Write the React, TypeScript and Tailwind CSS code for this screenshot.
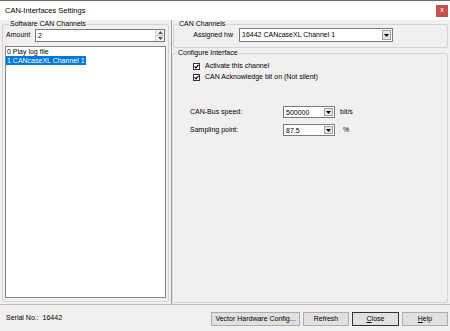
import React from "react";

function GroupBox({
  label,
  className,
  children,
}: {
  label: string;
  className?: string;
  children?: React.ReactNode;
}) {
  return (
    <fieldset className={`rounded-[2px] border border-[#d5d5d5] ${className ?? ""}`}>
      <legend className="ml-[4px] px-[1px] leading-[8px]">{label}</legend>
      {children}
    </fieldset>
  );
}

function DropArrow() {
  return (
    <span className="flex h-full w-[9px] items-center justify-center border border-[#a0a0a0] bg-[#e6e6e6]">
      <svg width="5" height="3" viewBox="0 0 5 3">
        <path d="M0 0h5L2.5 3z" fill="#000" />
      </svg>
    </span>
  );
}

function Combo({ value, className }: { value: string; className?: string }) {
  return (
    <div
      className={`flex items-stretch border border-[#7a7a7a] bg-white p-[1px] ${className ?? ""}`}
    >
      <span className="flex-1 pl-[1px] leading-[10px]">{value}</span>
      <DropArrow />
    </div>
  );
}

function CheckBox({ label }: { label: string }) {
  return (
    <div className="flex h-[11px] items-center gap-[5px]">
      <span className="flex h-[7px] w-[7px] items-center justify-center border border-[#333] bg-white">
        <svg width="5" height="5" viewBox="0 0 5 5">
          <path d="M0.5 2.3L2 3.8L4.5 0.8" stroke="#000" strokeWidth="1.2" fill="none" />
        </svg>
      </span>
      <span>{label}</span>
    </div>
  );
}

function Button({
  children,
  width,
  primary,
}: {
  children: React.ReactNode;
  width: string;
  primary?: boolean;
}) {
  return (
    <button
      className={`flex h-[14px] items-center justify-center bg-[#e1e1e1] leading-none ${width} ${
        primary ? "border border-[#333]" : "border border-[#adadad]"
      }`}
    >
      {children}
    </button>
  );
}

export default function App() {
  return (
    <div className="flex h-[331px] w-[450px] flex-col overflow-hidden bg-[#f0f0f0] font-['Liberation_Sans',Arial,sans-serif] text-[7px] text-black">
      {/* title bar */}
      <div className="flex h-[20px] shrink-0 items-center justify-between border-t border-[#6b6b6b] bg-white pl-[5px] pr-[2px]">
        <span className="text-[7.5px]">CAN-Interfaces Settings</span>
        <span className="flex h-[12px] w-[12px] items-center justify-center bg-[#c75050] text-[7px] text-white">
          x
        </span>
      </div>

      <div className="flex h-[285px] shrink-0 border-b border-[#bdbdbd]">
        {/* left */}
        <div className="flex w-[172px] border-r border-[#a0a0a0] pb-[2px] pl-[2px] pr-[2px]">
          <GroupBox label="Software CAN Channels" className="flex w-full flex-col px-[2px] pb-[3px]">
            <div className="mt-[1px] flex h-[13px] items-center">
              <span className="w-[30px] pl-[1px]">Amount</span>
              <div className="flex h-[13px] w-[130px] items-stretch border border-[#7a7a7a] bg-white">
                <span className="flex-1 pl-[2px] leading-[11px]">2</span>
                <span className="flex w-[9px] flex-col border-l border-[#d0d0d0]">
                  <span className="flex flex-1 items-center justify-center border-b border-[#c0c0c0] bg-[#f4f4f4]">
                    <svg width="5" height="3" viewBox="0 0 5 3">
                      <path d="M0 3h5L2.5 0z" fill="#555" />
                    </svg>
                  </span>
                  <span className="flex flex-1 items-center justify-center bg-[#f4f4f4]">
                    <svg width="5" height="3" viewBox="0 0 5 3">
                      <path d="M0 0h5L2.5 3z" fill="#555" />
                    </svg>
                  </span>
                </span>
              </div>
            </div>
            <div className="mt-[4px] flex-1 border border-[#828790] bg-white pt-[0px] leading-[9px]">
              <div className="pl-[1px]">0 Play log file</div>
              <div>
                <span className="inline-block bg-[#0078d7] pl-[1px] pr-[1px] text-white">
                  1 CANcaseXL Channel 1
                </span>
              </div>
            </div>
          </GroupBox>
        </div>

        {/* right */}
        <div className="flex flex-1 flex-col pb-[1px] pr-[2px]">
          <GroupBox label="CAN Channels" className="ml-[1px] h-[28px]">
            <div className="flex items-center">
              <span className="w-[59px] text-right">Assigned hw</span>
              <Combo value="16442 CANcaseXL Channel 1" className="ml-[6px] h-[14px] w-[154px]" />
            </div>
          </GroupBox>
          <GroupBox label="Configure Interface" className="mt-[1px] flex-1">
            <div className="ml-[20px] mt-[4px] flex flex-col">
              <CheckBox label="Activate this channel" />
              <CheckBox label="CAN Acknowledge bit on (Not silent)" />
            </div>
            <div className="ml-[17px] mt-[23px] flex flex-col gap-[6px]">
              <div className="flex h-[12px] items-center">
                <span className="w-[93px]">CAN-Bus speed:</span>
                <Combo value="500000" className="h-[12px] w-[52px]" />
                <span className="ml-[5px]">bit/s</span>
              </div>
              <div className="flex h-[12px] items-center">
                <span className="w-[93px]">Sampling point:</span>
                <Combo value="87.5" className="h-[12px] w-[52px]" />
                <span className="ml-[8px]">%</span>
              </div>
            </div>
          </GroupBox>
        </div>
      </div>

      {/* footer */}
      <div className="flex flex-1 items-center justify-between pl-[6px] pr-[2px] pt-[1px]">
        <span>Serial No.:&nbsp; 16442</span>
        <div className="flex items-center gap-[3px]">
          <Button width="w-[89px]">Vector Hardware Config...</Button>
          <Button width="w-[46px]">Refresh</Button>
          <Button width="w-[47px]" primary>
            <span className="underline">C</span>lose
          </Button>
          <Button width="w-[46px]">
            <span className="underline">H</span>elp
          </Button>
        </div>
      </div>
    </div>
  );
}
